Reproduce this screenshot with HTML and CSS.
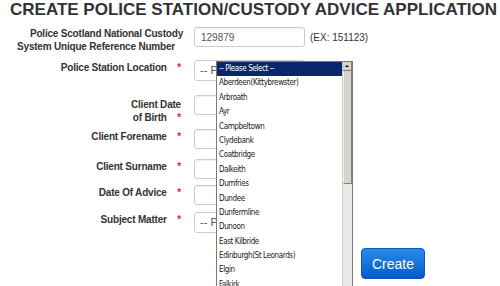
FILE: index.html
```html
<!DOCTYPE html>
<html lang="en">
<head>
<meta charset="utf-8">
<title>Create Police Station/Custody Advice Application</title>
<link rel="stylesheet" href="styles.css">
</head>
<body>
<div class="page">
  <h1 class="title">CREATE POLICE STATION/CUSTODY ADVICE APPLICATION</h1>
  <form class="form">
    <div class="row row-ref">
      <label class="label label-ref"><span class="l1">Police Scotland National Custody</span><span class="l2">System Unique Reference Number</span></label>
      <div class="field">
        <input class="input" type="text" value="129879">
        <span class="hint">(EX: 151123)</span>
      </div>
    </div>
    <div class="row row-station">
      <label class="label">Police Station Location <span class="req">*</span></label>
      <div class="field"><div class="select">-- Please Select --</div></div>
    </div>
    <div class="row row-dob">
      <label class="label label-dob">Client Date<br>of Birth <span class="req">*</span></label>
      <div class="field"><input class="input" type="text"></div>
    </div>
    <div class="row row-fore">
      <label class="label">Client Forename <span class="req">*</span></label>
      <div class="field"><input class="input" type="text"></div>
    </div>
    <div class="row row-sur">
      <label class="label">Client Surname <span class="req">*</span></label>
      <div class="field"><input class="input" type="text"></div>
    </div>
    <div class="row row-date">
      <label class="label">Date Of Advice <span class="req">*</span></label>
      <div class="field"><input class="input" type="text"></div>
    </div>
    <div class="row row-subject">
      <label class="label">Subject Matter <span class="req">*</span></label>
      <div class="field"><div class="select">-- Please Select --</div></div>
    </div>
    <div class="actions">
      <button type="button" class="btn">Create</button>
    </div>
  </form>

  <div class="dropdown">
    <ul class="options">
      <li class="opt selected">-- Please Select --</li>
      <li class="opt">Aberdeen(Kittybrewster)</li>
      <li class="opt">Arbroath</li>
      <li class="opt">Ayr</li>
      <li class="opt">Campbeltown</li>
      <li class="opt">Clydebank</li>
      <li class="opt">Coatbridge</li>
      <li class="opt">Dalkeith</li>
      <li class="opt">Dumfries</li>
      <li class="opt">Dundee</li>
      <li class="opt">Dunfermline</li>
      <li class="opt">Dunoon</li>
      <li class="opt">East Kilbride</li>
      <li class="opt">Edinburgh(St Leonards)</li>
      <li class="opt">Elgin</li>
      <li class="opt">Falkirk</li>
    </ul>
    <div class="scrollbar">
      <div class="sb-up"><span class="sb-arrow"></span></div>
      <div class="sb-thumb"></div>
      <div class="sb-track"></div>
    </div>
  </div>
</div>
</body>
</html>
```
FILE: styles.css
```css
html, body {
  margin: 0;
  padding: 0;
  background: #fff;
  overflow: hidden;
}
body {
  width: 500px;
  height: 286px;
  font-family: "Liberation Sans", Arial, sans-serif;
  color: #333;
}
.page {
  position: relative;
  height: 286px;
  overflow: hidden;
}
.title {
  margin: 0;
  padding: 1px 0 0 10px;
  font-size: 17px;
  line-height: 17px;
  font-weight: bold;
  color: #333;
  white-space: nowrap;
}
.form {
  margin: 0;
  padding: 0;
}
.row {
  display: grid;
  grid-template-columns: 181px 1fr;
  column-gap: 13px;
  align-items: start;
}
.row-ref { margin-top: 9px; }
.row-station { margin-top: 7px; }
.row-dob { margin-top: 14px; }
.row-fore { margin-top: 5px; }
.row-sur { margin-top: 10px; }
.row-date { margin-top: 6px; }
.row-subject { margin-top: 7px; }
.label {
  font-size: 10px;
  font-weight: bold;
  line-height: 13px;
  letter-spacing: -0.2px;
  text-align: right;
  padding-top: 1px;
  color: #333;
  white-space: nowrap;
}
.label-ref {
  display: flex;
  flex-direction: column;
  align-items: flex-end;
  padding-top: 0;
}
.label-ref .l1 { margin-right: -2px; }
.label-ref .l2 { padding-right: 6px; }
.label-dob { padding-top: 3px; }
.req {
  color: #e8262a;
  margin-left: 8px;
  font-weight: bold;
}
.field {
  display: flex;
  align-items: center;
  gap: 5px;
}
.input {
  box-sizing: border-box;
  width: 111px;
  height: 20px;
  margin: 0;
  padding: 0 6px;
  border: 1px solid #ccc;
  border-radius: 3px;
  font-family: "Liberation Sans", Arial, sans-serif;
  font-size: 10px;
  color: #555;
  background: #fff;
  box-shadow: inset 0 1px 1px rgba(0,0,0,0.06);
}
.hint {
  font-size: 10px;
  color: #333;
}
.select {
  box-sizing: border-box;
  width: 111px;
  height: 21px;
  padding: 0 5px;
  border: 1px solid #ccc;
  border-radius: 3px;
  font-size: 11px;
  line-height: 19px;
  color: #555;
  white-space: nowrap;
  overflow: hidden;
}
.actions {
  display: flex;
  margin-top: 15px;
  padding-left: 361px;
}
.btn {
  box-sizing: border-box;
  width: 64px;
  height: 31px;
  border: 1px solid #0a56c2;
  border-radius: 4px;
  background: linear-gradient(#2b8ce6, #0559cf);
  color: #fff;
  font-family: "Liberation Sans", Arial, sans-serif;
  font-size: 14px;
  padding: 0;
}

/* open dropdown list */
.dropdown {
  position: absolute;
  left: 216px;
  top: 61px;
  width: 137px;
  height: 240px;
  box-sizing: border-box;
  border: 1px solid #7a7a7a;
  background: #fff;
  display: flex;
}
.options {
  list-style: none;
  margin: 0;
  padding: 0;
  flex: 1;
  overflow: hidden;
}
.opt {
  height: 14.4px;
  line-height: 14.4px;
  padding-left: 2px;
  font-family: "DejaVu Sans", sans-serif;
  font-stretch: condensed;
  font-size: 8px;
  letter-spacing: -0.4px;
  color: #222;
  white-space: nowrap;
}
.opt.selected {
  background: #0c266d;
  color: #fff;
}
.scrollbar {
  width: 9px;
  display: flex;
  flex-direction: column;
  border-left: 1px solid #c8c8c8;
}
.sb-up {
  height: 9px;
  box-sizing: border-box;
  background: #d6d3cc;
  border-right: 1px solid #808080;
  border-bottom: 1px solid #808080;
  display: flex;
  align-items: center;
  justify-content: center;
}
.sb-arrow {
  width: 0;
  height: 0;
  border-left: 2px solid transparent;
  border-right: 2px solid transparent;
  border-bottom: 2px solid #000;
}
.sb-thumb {
  height: 113px;
  box-sizing: border-box;
  background: #d6d3cc;
  border-right: 1px solid #808080;
  border-bottom: 1px solid #808080;
  border-left: 1px solid #f4f4f0;
}
.sb-track {
  flex: 1;
  background: #ebeae6;
}
```
